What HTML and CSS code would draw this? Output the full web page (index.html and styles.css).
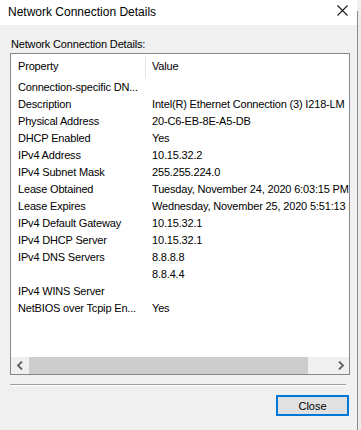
FILE: index.html
```html
<!DOCTYPE html>
<html>
<head>
<meta charset="utf-8">
<link rel="stylesheet" href="styles.css">
</head>
<body>
<div class="screen">
  <div class="dialog">
    <div class="titlebar">
      <span class="title">Network Connection Details</span>
      <svg class="close-x" width="11" height="11" viewBox="0 0 11 11"><path d="M0.5 0.5 L10.5 10.5 M10.5 0.5 L0.5 10.5" stroke="#1a1a1a" stroke-width="1.1" fill="none"/></svg>
    </div>
    <div class="body">
      <div class="label">Network Connection Details:</div>
      <div class="list">
        <div class="header">
          <div class="hcell prop">Property</div>
          <div class="hcell val">Value</div>
        </div>
        <div class="rows">
          <div class="row"><div class="c prop">Connection-specific DN...</div><div class="c val"></div></div>
          <div class="row"><div class="c prop">Description</div><div class="c val">Intel(R) Ethernet Connection (3) I218-LM</div></div>
          <div class="row"><div class="c prop">Physical Address</div><div class="c val">20-C6-EB-8E-A5-DB</div></div>
          <div class="row"><div class="c prop">DHCP Enabled</div><div class="c val">Yes</div></div>
          <div class="row"><div class="c prop">IPv4 Address</div><div class="c val">10.15.32.2</div></div>
          <div class="row"><div class="c prop">IPv4 Subnet Mask</div><div class="c val">255.255.224.0</div></div>
          <div class="row"><div class="c prop">Lease Obtained</div><div class="c val">Tuesday, November 24, 2020 6:03:15 PM</div></div>
          <div class="row"><div class="c prop">Lease Expires</div><div class="c val">Wednesday, November 25, 2020 5:51:13 PM</div></div>
          <div class="row"><div class="c prop">IPv4 Default Gateway</div><div class="c val">10.15.32.1</div></div>
          <div class="row"><div class="c prop">IPv4 DHCP Server</div><div class="c val">10.15.32.1</div></div>
          <div class="row"><div class="c prop">IPv4 DNS Servers</div><div class="c val">8.8.8.8</div></div>
          <div class="row"><div class="c prop"></div><div class="c val">8.8.4.4</div></div>
          <div class="row"><div class="c prop">IPv4 WINS Server</div><div class="c val"></div></div>
          <div class="row"><div class="c prop">NetBIOS over Tcpip En...</div><div class="c val">Yes</div></div>
        </div>
        <div class="hscroll">
          <div class="sbtn"><svg width="8" height="9" viewBox="0 0 8 9"><path d="M6 0.5 L2 4.5 L6 8.5" stroke="#606060" stroke-width="1.8" fill="none"/></svg></div>
          <div class="track"><div class="thumb"></div></div>
          <div class="sbtn"><svg width="8" height="9" viewBox="0 0 8 9"><path d="M2 0.5 L6 4.5 L2 8.5" stroke="#606060" stroke-width="1.8" fill="none"/></svg></div>
        </div>
      </div>
      <div class="sep"></div>
      <div class="actions">
        <button class="btn">Close</button>
      </div>
    </div>
  </div>
  <div class="edge"></div>
</div>
</body>
</html>
```
FILE: styles.css
```css
html, body {
  margin: 0;
  padding: 0;
}
body {
  width: 361px;
  height: 430px;
  overflow: hidden;
  background: #f0f0f0;
  font-family: "Liberation Sans", Arial, sans-serif;
  font-size: 11px;
  letter-spacing: -0.17px;
  color: #000;
}
.screen {
  display: flex;
  height: 430px;
}
.dialog {
  width: 358px;
  display: flex;
  flex-direction: column;
  background: #f0f0f0;
}
.edge {
  width: 3px;
  margin-top: 11px;
  border-left: 1px solid #8c8c8c;
  background: #ececec;
}
.titlebar {
  height: 25px;
  background: #fff;
  display: flex;
  align-items: center;
  justify-content: space-between;
  padding: 0 9px 0 8px;
}
.title {
  font-family: "Liberation Sans", Arial, sans-serif;
  font-size: 12px;
  letter-spacing: 0;
  color: #000;
  margin-top: -1px;
}
.close-x {
  margin-top: -5px;
}
.body {
  padding: 12px 0 0 10px;
  display: flex;
  flex-direction: column;
}
.label {
  height: 16px;
  line-height: 14px;
  padding-left: 1px;
}
.list {
  width: 338px;
  height: 320px;
  border: 1px solid #828790;
  background: #fff;
  display: flex;
  flex-direction: column;
}
.header {
  display: flex;
  height: 25px;
  flex: none;
}
.hcell {
  line-height: 25px;
  white-space: nowrap;
}
.prop {
  width: 127px;
  padding-left: 7px;
  flex: none;
  white-space: nowrap;
  overflow: hidden;
}
.hcell.prop {
  border-right: 1px solid #e5e5e5;
  height: 23px;
  margin-top: 1px;
  line-height: 23px;
}
.val {
  padding-left: 6px;
  flex: 1;
  white-space: nowrap;
  overflow: hidden;
}
.rows {
  flex: 1;
  display: flex;
  flex-direction: column;
}
.row {
  display: flex;
  height: 17px;
  line-height: 17px;
}
.row .prop {
  width: 128px;
}
.hscroll {
  height: 17px;
  display: flex;
  background: #f0f0f0;
  flex: none;
}
.sbtn {
  width: 17px;
  display: flex;
  align-items: center;
  justify-content: center;
}
.track {
  flex: 1;
  display: flex;
  padding-left: 1px;
}
.thumb {
  width: 279px;
  background: #cdcdcd;
}
.sep {
  width: 336px;
  margin-top: 9px;
  border-top: 1px solid #a0a0a0;
  border-bottom: 1px solid #fff;
}
.actions {
  display: flex;
  justify-content: flex-end;
  width: 339px;
  margin-top: 9px;
}
.btn {
  width: 73px;
  height: 21px;
  border: 2px solid #0078d7;
  background: #e1e1e1;
  font-family: "Liberation Sans", Arial, sans-serif;
  font-size: 11px;
  letter-spacing: 0;
  color: #000;
  padding: 0;
  margin: 0;
}
```
